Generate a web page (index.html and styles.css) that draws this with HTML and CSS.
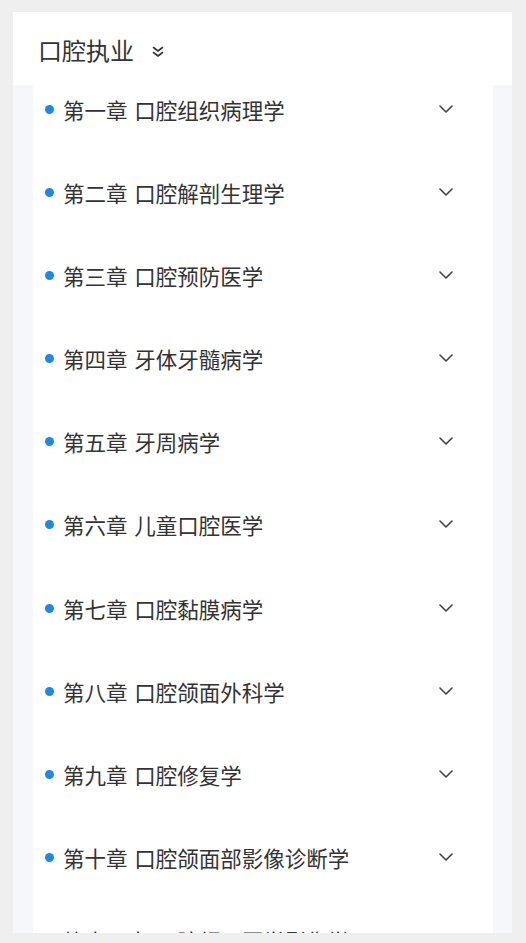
FILE: index.html
```html
<!DOCTYPE html>
<html lang="zh">
<head>
<meta charset="utf-8">
<link rel="stylesheet" href="styles.css">
</head>
<body>
<div class="panel">
  <div class="header">
    <span class="title">口腔执业</span>
    <svg class="dbl" width="12" height="12" viewBox="0 0 12 12"><path d="M1.5 1.5 L6 5 L10.5 1.5 M1.5 6.5 L6 10 L10.5 6.5" fill="none" stroke="#333" stroke-width="1.6" stroke-linecap="round" stroke-linejoin="round"/></svg>
  </div>
  <div class="body">
    <ul class="list">
      <li class="item"><div class="row"><span class="dot"></span><span class="name">第一章 口腔组织病理学</span><svg class="chev" width="14" height="8" viewBox="0 0 14 8"><path d="M1 1 L7 7 L13 1" fill="none" stroke="#444" stroke-width="1.6" stroke-linecap="round" stroke-linejoin="round"/></svg></div></li>
      <li class="item"><div class="row"><span class="dot"></span><span class="name">第二章 口腔解剖生理学</span><svg class="chev" width="14" height="8" viewBox="0 0 14 8"><path d="M1 1 L7 7 L13 1" fill="none" stroke="#444" stroke-width="1.6" stroke-linecap="round" stroke-linejoin="round"/></svg></div></li>
      <li class="item"><div class="row"><span class="dot"></span><span class="name">第三章 口腔预防医学</span><svg class="chev" width="14" height="8" viewBox="0 0 14 8"><path d="M1 1 L7 7 L13 1" fill="none" stroke="#444" stroke-width="1.6" stroke-linecap="round" stroke-linejoin="round"/></svg></div></li>
      <li class="item"><div class="row"><span class="dot"></span><span class="name">第四章 牙体牙髓病学</span><svg class="chev" width="14" height="8" viewBox="0 0 14 8"><path d="M1 1 L7 7 L13 1" fill="none" stroke="#444" stroke-width="1.6" stroke-linecap="round" stroke-linejoin="round"/></svg></div></li>
      <li class="item"><div class="row"><span class="dot"></span><span class="name">第五章 牙周病学</span><svg class="chev" width="14" height="8" viewBox="0 0 14 8"><path d="M1 1 L7 7 L13 1" fill="none" stroke="#444" stroke-width="1.6" stroke-linecap="round" stroke-linejoin="round"/></svg></div></li>
      <li class="item"><div class="row"><span class="dot"></span><span class="name">第六章 儿童口腔医学</span><svg class="chev" width="14" height="8" viewBox="0 0 14 8"><path d="M1 1 L7 7 L13 1" fill="none" stroke="#444" stroke-width="1.6" stroke-linecap="round" stroke-linejoin="round"/></svg></div></li>
      <li class="item"><div class="row"><span class="dot"></span><span class="name">第七章 口腔黏膜病学</span><svg class="chev" width="14" height="8" viewBox="0 0 14 8"><path d="M1 1 L7 7 L13 1" fill="none" stroke="#444" stroke-width="1.6" stroke-linecap="round" stroke-linejoin="round"/></svg></div></li>
      <li class="item"><div class="row"><span class="dot"></span><span class="name">第八章 口腔颌面外科学</span><svg class="chev" width="14" height="8" viewBox="0 0 14 8"><path d="M1 1 L7 7 L13 1" fill="none" stroke="#444" stroke-width="1.6" stroke-linecap="round" stroke-linejoin="round"/></svg></div></li>
      <li class="item"><div class="row"><span class="dot"></span><span class="name">第九章 口腔修复学</span><svg class="chev" width="14" height="8" viewBox="0 0 14 8"><path d="M1 1 L7 7 L13 1" fill="none" stroke="#444" stroke-width="1.6" stroke-linecap="round" stroke-linejoin="round"/></svg></div></li>
      <li class="item"><div class="row"><span class="dot"></span><span class="name">第十章 口腔颌面部影像诊断学</span><svg class="chev" width="14" height="8" viewBox="0 0 14 8"><path d="M1 1 L7 7 L13 1" fill="none" stroke="#444" stroke-width="1.6" stroke-linecap="round" stroke-linejoin="round"/></svg></div></li>
      <li class="item"><div class="row"><span class="dot"></span><span class="name">第十一章 口腔颌面医学影像学</span><svg class="chev" width="14" height="8" viewBox="0 0 14 8"><path d="M1 1 L7 7 L13 1" fill="none" stroke="#444" stroke-width="1.6" stroke-linecap="round" stroke-linejoin="round"/></svg></div></li>
    </ul>
  </div>
</div>
</body>
</html>
```
FILE: styles.css
```css
html, body {
  margin: 0;
  padding: 0;
  background: #efefef;
}
body {
  font-family: "Noto Sans CJK SC", "Noto Sans", sans-serif;
  color: #333;
}
.panel {
  margin: 12px 14px 0 13px;
  height: 921px;
  overflow: hidden;
  background: #fff;
}
.header {
  height: 73px;
  display: flex;
  align-items: center;
  padding-left: 25px;
  box-sizing: border-box;
}
.title {
  font-size: 24px;
  line-height: 30px;
  color: #333;
  margin-top: 3px;
}
.dbl {
  margin-left: 18px;
  margin-top: 7px;
}
.body {
  background: #f5f7fb;
  padding: 0 19px 0 20px;
}
.list {
  list-style: none;
  margin: 0;
  padding: 0;
  background: #fff;
}
.item {
  height: 83.2px;
}
.row {
  height: 49px;
  display: flex;
  align-items: center;
  padding: 0 40px 0 12px;
}
.dot {
  width: 9px;
  height: 9px;
  border-radius: 50%;
  background: #1e88e8;
  margin-right: 9px;
  flex: none;
  margin-top: -1px;
}
.name {
  flex: 1;
  font-size: 21.5px;
  line-height: 30px;
  word-spacing: 2px;
  color: #333;
}
.chev {
  flex: none;
  margin-top: -2px;
}
```
